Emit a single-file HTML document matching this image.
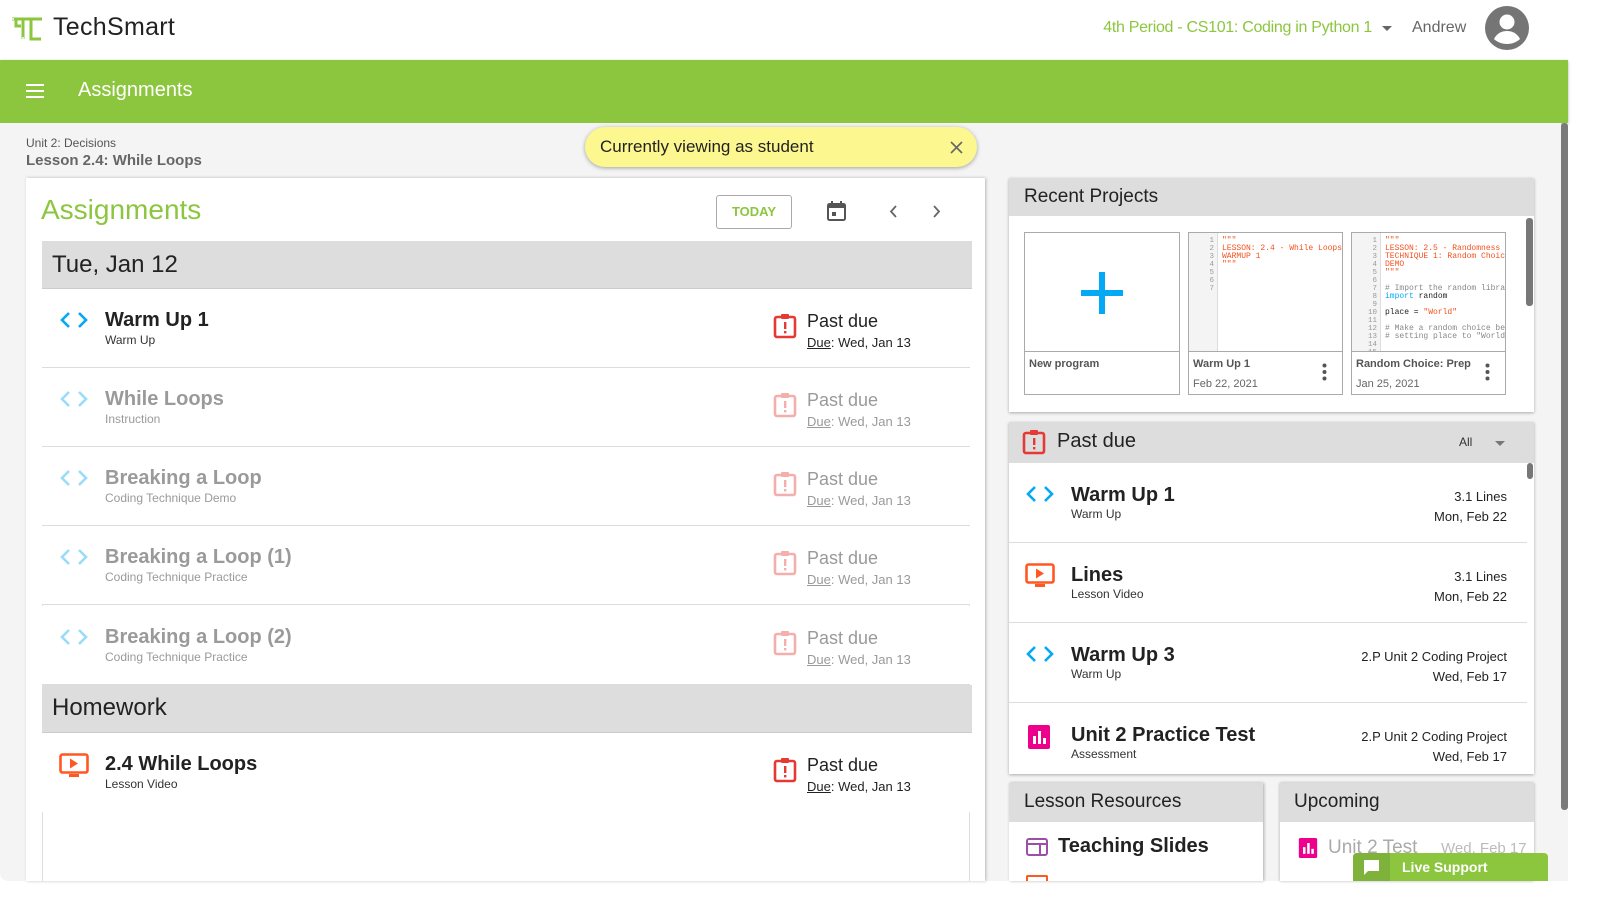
<!DOCTYPE html>
<html><head><meta charset="utf-8">
<style>
*{box-sizing:border-box;margin:0;padding:0}
body{width:1600px;height:899px;background:#fff;font-family:"Liberation Sans",Roboto,Arial,sans-serif;position:relative;overflow:hidden;color:#222}
.a{position:absolute}
.row{position:absolute;left:42px;width:928px;height:79px;border-bottom:1px solid #ddd;background:#fff}
.row .ic{position:absolute;left:18px;top:22px}
.row .t{position:absolute;left:63px;top:20px;font-size:20px;font-weight:bold;color:#222}
.row .s{position:absolute;left:63px;top:44px;font-size:12px;color:#333}
.row .pi{position:absolute;left:731px;top:24px}
.row .pd{position:absolute;left:765px;top:22px;font-size:18px;color:#222}
.row .dd{position:absolute;left:765px;top:46px;font-size:13px;color:#222}
.row .dd u{text-decoration:underline}
.fade .t,.fade .s,.fade .pd,.fade .dd{color:#9a9a9a}
.fade svg{opacity:.4}
.hdr{position:absolute;background:#ddd;color:#222}
.prow{position:absolute;left:1009px;width:518px;height:80px;border-bottom:1px solid #ddd;background:#fff}
.prow .ic{position:absolute;left:17px;top:22px}
.prow .t{position:absolute;left:62px;top:21px;font-size:20px;font-weight:bold}
.prow .s{position:absolute;left:62px;top:44px;font-size:12px;color:#333}
.prow .r1{position:absolute;right:20px;top:26px;font-size:13px;color:#222}
.prow .r2{position:absolute;right:20px;top:46px;font-size:13px;color:#222}
.card{position:absolute;top:232px;width:156px;height:163px;border:1px solid #aaa;background:#fff;overflow:hidden}
.card .img{position:absolute;left:0;top:0;width:154px;height:119px;border-bottom:1px solid #aaa;overflow:hidden}
.card .gut{position:absolute;left:0;top:0;width:29px;height:119px;background:#f4f4f4;border-right:1px solid #ddd;font:7.5px/8px "Liberation Mono",monospace;color:#999;text-align:right;padding:4px 3px 0 0}
.card .code{position:absolute;left:33px;top:4px;font:8px/8px "Liberation Mono",monospace;color:#222;white-space:pre}
.card .n{position:absolute;left:4px;top:125px;font-size:11px;font-weight:bold;color:#555}
.card .d{position:absolute;left:4px;top:145px;font-size:11px;color:#666}
.o{color:#f4511e}.g{color:#888}.b{color:#03a9f4}
</style></head><body>

<!-- header -->
<svg class="a" style="left:10px;top:16px" width="36" height="25" viewBox="0 0 36 25"><g fill="none" stroke="#8cc63f" stroke-width="3"><path d="M2 3h30"/><path d="M13 3v20"/><path d="M21 3v20h10"/><path d="M6 3v7h5"/></g><g fill="#fff"><circle cx="3" cy="3" r="1"/><circle cx="33" cy="3" r="1"/><circle cx="13" cy="22" r="1"/><circle cx="32" cy="23" r="1"/></g></svg>
<div class="a" style="left:53px;top:13px;font-size:25px;color:#222;letter-spacing:.3px">TechSmart</div>
<div class="a" style="right:228px;top:19px;font-size:16px;color:#8cc63f;letter-spacing:-.3px;white-space:nowrap">4th Period - CS101: Coding in Python 1</div>
<div class="a" style="left:1382px;top:26px;width:0;height:0;border-left:5px solid transparent;border-right:5px solid transparent;border-top:5px solid #666"></div>
<div class="a" style="left:1412px;top:19px;font-size:16px;color:#666">Andrew</div>
<svg class="a" style="left:1485px;top:6px" width="44" height="44" viewBox="0 0 44 44"><circle cx="22" cy="22" r="22" fill="#757575"/><circle cx="22" cy="16" r="7.5" fill="#fff"/><path d="M9 33c3-6 8-8 13-8s10 2 13 8c-3 3-8 5-13 5s-10-2-13-5z" fill="#fff"/></svg>

<!-- green bar -->
<div class="a" style="left:0;top:60px;width:1568px;height:63px;background:#8cc63f;box-shadow:0 1px 3px rgba(0,0,0,.3)"></div>
<svg class="a" style="left:26px;top:84px" width="18" height="14"><g fill="#fff"><rect y="0" width="18" height="2"/><rect y="6" width="18" height="2"/><rect y="12" width="18" height="2"/></g></svg>
<div class="a" style="left:78px;top:79px;font-size:20px;color:#fff;font-weight:500">Assignments</div>

<!-- main bg -->
<div class="a" style="left:0;top:123px;width:1561px;height:758px;background:#f4f4f4;border-bottom-left-radius:8px"></div>
<div class="a" style="left:1561px;top:123px;width:7px;height:687px;background:#7a7a7a;border-radius:3px"></div>
<div class="a" style="left:1561px;top:810px;width:7px;height:71px;background:#f4f4f4"></div>

<div class="a" style="left:26px;top:136px;font-size:12px;color:#555">Unit 2: Decisions</div>
<div class="a" style="left:26px;top:152px;font-size:15px;font-weight:bold;color:#666">Lesson 2.4: While Loops</div>

<!-- toast -->
<div class="a" style="left:585px;top:127px;width:392px;height:40px;background:#fdf78f;border-radius:20px;box-shadow:0 1px 4px rgba(0,0,0,.35)"></div>
<div class="a" style="left:600px;top:137px;font-size:17px;color:#222">Currently viewing as student</div>
<svg class="a" style="left:950px;top:141px" width="13" height="13"><path d="M1 1l11 11M12 1L1 12" stroke="#666" stroke-width="1.6"/></svg>

<!-- left card -->
<div class="a" style="left:26px;top:178px;width:959px;height:703px;background:#fff;box-shadow:1px 0 3px rgba(0,0,0,.25)"></div>
<div class="a" style="left:41px;top:194px;font-size:28px;color:#8cc63f">Assignments</div>
<div class="a" style="left:716px;top:195px;width:76px;height:34px;border:1px solid #aaa;border-radius:3px;font-size:13px;font-weight:bold;color:#8cc63f;text-align:center;line-height:32px">TODAY</div>
<svg class="a" style="left:827px;top:201px" width="19" height="20" viewBox="0 0 19 20"><rect x="1" y="3" width="17" height="16" rx="1.5" fill="none" stroke="#555" stroke-width="2"/><rect x="1" y="3" width="17" height="4" fill="#555"/><rect x="4" y="0" width="2" height="4" fill="#555"/><rect x="13" y="0" width="2" height="4" fill="#555"/><rect x="5" y="11" width="4" height="4" fill="#555"/></svg>
<svg class="a" style="left:889px;top:205px" width="9" height="13"><path d="M7 1L2 6.5 7 12" fill="none" stroke="#666" stroke-width="1.8"/></svg>
<svg class="a" style="left:932px;top:205px" width="9" height="13"><path d="M2 1l5 5.5L2 12" fill="none" stroke="#666" stroke-width="1.8"/></svg>

<div class="a" style="left:42px;top:241px;width:928px;height:640px;border-left:1px solid #ddd;border-right:1px solid #ddd"></div>
<div class="hdr" style="left:42px;top:241px;width:930px;height:48px;font-size:24px;padding:10px 0 0 10px;border-bottom:1px solid #ccc">Tue, Jan 12</div>

<div class="row" style="top:289px"><svg class="ic" width="28" height="18" viewBox="0 0 28 18"><path d="M9 2L2 9l7 7M19 2l7 7-7 7" fill="none" stroke="#03a9f4" stroke-width="2.6"/></svg><div class="t">Warm Up 1</div><div class="s">Warm Up</div>
<svg class="pi" width="24" height="26" viewBox="0 0 24 26"><rect x="2" y="4" width="20" height="20" rx="2" fill="none" stroke="#e53935" stroke-width="2.6"/><rect x="8" y="1" width="8" height="5" rx="1" fill="#e53935"/><rect x="11" y="9" width="2.4" height="7" fill="#e53935"/><rect x="11" y="18" width="2.4" height="2.4" fill="#e53935"/></svg><div class="pd">Past due</div><div class="dd"><u>Due</u>: Wed, Jan 13</div></div>

<div class="row fade" style="top:368px"><svg class="ic" width="28" height="18" viewBox="0 0 28 18"><path d="M9 2L2 9l7 7M19 2l7 7-7 7" fill="none" stroke="#03a9f4" stroke-width="2.6"/></svg><div class="t">While Loops</div><div class="s">Instruction</div>
<svg class="pi" width="24" height="26" viewBox="0 0 24 26"><rect x="2" y="4" width="20" height="20" rx="2" fill="none" stroke="#e53935" stroke-width="2.6"/><rect x="8" y="1" width="8" height="5" rx="1" fill="#e53935"/><rect x="11" y="9" width="2.4" height="7" fill="#e53935"/><rect x="11" y="18" width="2.4" height="2.4" fill="#e53935"/></svg><div class="pd">Past due</div><div class="dd"><u>Due</u>: Wed, Jan 13</div></div>

<div class="row fade" style="top:447px"><svg class="ic" width="28" height="18" viewBox="0 0 28 18"><path d="M9 2L2 9l7 7M19 2l7 7-7 7" fill="none" stroke="#03a9f4" stroke-width="2.6"/></svg><div class="t">Breaking a Loop</div><div class="s">Coding Technique Demo</div>
<svg class="pi" width="24" height="26" viewBox="0 0 24 26"><rect x="2" y="4" width="20" height="20" rx="2" fill="none" stroke="#e53935" stroke-width="2.6"/><rect x="8" y="1" width="8" height="5" rx="1" fill="#e53935"/><rect x="11" y="9" width="2.4" height="7" fill="#e53935"/><rect x="11" y="18" width="2.4" height="2.4" fill="#e53935"/></svg><div class="pd">Past due</div><div class="dd"><u>Due</u>: Wed, Jan 13</div></div>

<div class="row fade" style="top:526px"><svg class="ic" width="28" height="18" viewBox="0 0 28 18"><path d="M9 2L2 9l7 7M19 2l7 7-7 7" fill="none" stroke="#03a9f4" stroke-width="2.6"/></svg><div class="t">Breaking a Loop (1)</div><div class="s">Coding Technique Practice</div>
<svg class="pi" width="24" height="26" viewBox="0 0 24 26"><rect x="2" y="4" width="20" height="20" rx="2" fill="none" stroke="#e53935" stroke-width="2.6"/><rect x="8" y="1" width="8" height="5" rx="1" fill="#e53935"/><rect x="11" y="9" width="2.4" height="7" fill="#e53935"/><rect x="11" y="18" width="2.4" height="2.4" fill="#e53935"/></svg><div class="pd">Past due</div><div class="dd"><u>Due</u>: Wed, Jan 13</div></div>

<div class="row fade" style="top:606px"><svg class="ic" width="28" height="18" viewBox="0 0 28 18"><path d="M9 2L2 9l7 7M19 2l7 7-7 7" fill="none" stroke="#03a9f4" stroke-width="2.6"/></svg><div class="t">Breaking a Loop (2)</div><div class="s">Coding Technique Practice</div>
<svg class="pi" width="24" height="26" viewBox="0 0 24 26"><rect x="2" y="4" width="20" height="20" rx="2" fill="none" stroke="#e53935" stroke-width="2.6"/><rect x="8" y="1" width="8" height="5" rx="1" fill="#e53935"/><rect x="11" y="9" width="2.4" height="7" fill="#e53935"/><rect x="11" y="18" width="2.4" height="2.4" fill="#e53935"/></svg><div class="pd">Past due</div><div class="dd"><u>Due</u>: Wed, Jan 13</div></div>

<div class="hdr" style="left:42px;top:685px;width:930px;height:48px;font-size:24px;padding:9px 0 0 10px;border-bottom:1px solid #ccc">Homework</div>
<div class="row" style="top:733px;border-bottom:none"><svg class="ic" style="top:20px;left:17px" width="30" height="26" viewBox="0 0 30 26"><rect x="1.5" y="1.5" width="27" height="18" rx="2" fill="none" stroke="#ff5722" stroke-width="2.6"/><path d="M11 5.5v10l8-5z" fill="#ff5722"/><rect x="10" y="21" width="10" height="3" fill="#ff5722"/></svg><div class="t">2.4 While Loops</div><div class="s">Lesson Video</div>
<svg class="pi" width="24" height="26" viewBox="0 0 24 26"><rect x="2" y="4" width="20" height="20" rx="2" fill="none" stroke="#e53935" stroke-width="2.6"/><rect x="8" y="1" width="8" height="5" rx="1" fill="#e53935"/><rect x="11" y="9" width="2.4" height="7" fill="#e53935"/><rect x="11" y="18" width="2.4" height="2.4" fill="#e53935"/></svg><div class="pd">Past due</div><div class="dd"><u>Due</u>: Wed, Jan 13</div></div>

<!-- Recent projects -->
<div class="a" style="left:1009px;top:178px;width:525px;height:234px;background:#fff;box-shadow:0 1px 3px rgba(0,0,0,.3)"></div>
<div class="hdr" style="left:1009px;top:178px;width:525px;height:38px;font-size:19px;padding:8px 0 0 15px">Recent Projects</div>
<div class="a" style="left:1526px;top:218px;width:7px;height:88px;background:#777;border-radius:3px"></div>
<div class="card" style="left:1024px"><div class="img"><svg class="a" style="left:56px;top:39px" width="42" height="42"><rect x="18" y="0" width="6" height="42" fill="#03a9f4"/><rect x="0" y="18" width="42" height="6" fill="#03a9f4"/></svg></div><div class="n">New program</div></div>
<div class="card" style="left:1188px;width:155px"><div class="img"><div class="gut">1<br>2<br>3<br>4<br>5<br>6<br>7</div><div class="code"><span class="o">"""
LESSON: 2.4 - While Loops
WARMUP 1
"""</span></div></div><div class="n">Warm Up 1</div><div class="d">Feb 22, 2021</div>
<svg class="a" style="left:133px;top:130px" width="5" height="18"><circle cx="2.5" cy="2.5" r="2" fill="#555"/><circle cx="2.5" cy="9" r="2" fill="#555"/><circle cx="2.5" cy="15.5" r="2" fill="#555"/></svg></div>
<div class="card" style="left:1351px;width:155px"><div class="img"><div class="gut">1<br>2<br>3<br>4<br>5<br>6<br>7<br>8<br>9<br>10<br>11<br>12<br>13<br>14<br>15</div><div class="code"><span class="o">"""
LESSON: 2.5 - Randomness &amp;
TECHNIQUE 1: Random Choice
DEMO
"""</span>

<span class="g"># Import the random library</span>
<span class="b">import</span> random

place = <span class="o">"World"</span>

<span class="g"># Make a random choice bet</span>
<span class="g"># setting place to "World"</span></div></div><div class="n">Random Choice: Prep</div><div class="d">Jan 25, 2021</div>
<svg class="a" style="left:133px;top:130px" width="5" height="18"><circle cx="2.5" cy="2.5" r="2" fill="#555"/><circle cx="2.5" cy="9" r="2" fill="#555"/><circle cx="2.5" cy="15.5" r="2" fill="#555"/></svg></div>

<!-- Past due panel -->
<div class="a" style="left:1009px;top:422px;width:525px;height:352px;background:#fff;box-shadow:0 1px 3px rgba(0,0,0,.3)"></div>
<div class="hdr" style="left:1009px;top:422px;width:525px;height:41px;font-size:20px;padding:8px 0 0 48px">Past due</div>
<svg class="a" style="left:1022px;top:429px" width="24" height="26" viewBox="0 0 24 26"><rect x="2" y="4" width="20" height="20" rx="2" fill="none" stroke="#e53935" stroke-width="2.6"/><rect x="8" y="1" width="8" height="5" rx="1" fill="#e53935"/><rect x="11" y="9" width="2.4" height="7" fill="#e53935"/><rect x="11" y="18" width="2.4" height="2.4" fill="#e53935"/></svg>
<div class="a" style="left:1459px;top:435px;font-size:12px;color:#333">All</div>
<div class="a" style="left:1495px;top:441px;width:0;height:0;border-left:5px solid transparent;border-right:5px solid transparent;border-top:5px solid #777"></div>
<div class="a" style="left:1527px;top:463px;width:6px;height:16px;background:#777;border-radius:3px"></div>

<div class="prow" style="top:463px"><svg class="ic" width="28" height="18" viewBox="0 0 28 18"><path d="M9 2L2 9l7 7M19 2l7 7-7 7" fill="none" stroke="#03a9f4" stroke-width="2.6"/></svg><div class="t">Warm Up 1</div><div class="s">Warm Up</div><div class="r1">3.1 Lines</div><div class="r2">Mon, Feb 22</div></div>
<div class="prow" style="top:543px"><svg class="ic" style="top:20px;left:16px" width="30" height="26" viewBox="0 0 30 26"><rect x="1.5" y="1.5" width="27" height="18" rx="2" fill="none" stroke="#ff5722" stroke-width="2.6"/><path d="M11 5.5v10l8-5z" fill="#ff5722"/><rect x="10" y="21" width="10" height="3" fill="#ff5722"/></svg><div class="t">Lines</div><div class="s">Lesson Video</div><div class="r1">3.1 Lines</div><div class="r2">Mon, Feb 22</div></div>
<div class="prow" style="top:623px"><svg class="ic" width="28" height="18" viewBox="0 0 28 18"><path d="M9 2L2 9l7 7M19 2l7 7-7 7" fill="none" stroke="#03a9f4" stroke-width="2.6"/></svg><div class="t">Warm Up 3</div><div class="s">Warm Up</div><div class="r1">2.P Unit 2 Coding Project</div><div class="r2">Wed, Feb 17</div></div>
<div class="prow" style="top:703px;height:71px;border-bottom:none"><svg class="ic" style="left:19px" width="22" height="24" viewBox="0 0 22 24"><rect width="22" height="24" rx="2" fill="#ec008c"/><rect x="5" y="11" width="3" height="8" fill="#fff"/><rect x="10" y="6" width="3" height="13" fill="#fff"/><rect x="15" y="13" width="3" height="6" fill="#fff"/></svg><div class="t">Unit 2 Practice Test</div><div class="s">Assessment</div><div class="r1">2.P Unit 2 Coding Project</div><div class="r2">Wed, Feb 17</div></div>

<!-- Lesson resources / upcoming -->
<div class="a" style="left:1009px;top:783px;width:254px;height:98px;background:#fff;box-shadow:1px 0 3px rgba(0,0,0,.3)"></div>
<div class="hdr" style="left:1009px;top:783px;width:254px;height:39px;font-size:19px;padding:8px 0 0 15px">Lesson Resources</div>
<svg class="a" style="left:1026px;top:838px" width="22" height="18" viewBox="0 0 22 18"><rect x="1" y="1" width="20" height="16" rx="2" fill="none" stroke="#9c4fa6" stroke-width="2"/><rect x="1" y="5" width="20" height="2" fill="#9c4fa6"/><rect x="13" y="7" width="2" height="10" fill="#9c4fa6"/></svg>
<div class="a" style="left:1058px;top:835px;font-size:20px;font-weight:bold">Teaching Slides</div>
<div class="a" style="left:1026px;top:875px;width:22px;height:6px;border:2px solid #ff5722;border-bottom:none;border-radius:2px 2px 0 0"></div>

<div class="a" style="left:1280px;top:783px;width:254px;height:98px;background:#fff;box-shadow:0 0 3px rgba(0,0,0,.3)"></div>
<div class="hdr" style="left:1280px;top:783px;width:254px;height:39px;font-size:19px;padding:8px 0 0 14px">Upcoming</div>
<svg class="a" style="left:1298px;top:838px" width="20" height="20" viewBox="0 0 22 24"><rect width="22" height="24" rx="2" fill="#ec008c"/><rect x="5" y="11" width="3" height="8" fill="#fff"/><rect x="10" y="6" width="3" height="13" fill="#fff"/><rect x="15" y="13" width="3" height="6" fill="#fff"/></svg>
<div class="a" style="left:1328px;top:837px;font-size:19px;color:#aaa">Unit 2 Test</div>
<div class="a" style="left:1441px;top:840px;font-size:15px;color:#bbb">Wed, Feb 17</div>

<!-- live support -->
<div class="a" style="left:1353px;top:853px;width:195px;height:28px;background:#8cc63f;border-radius:4px 4px 0 0"></div>
<div class="a" style="left:1353px;top:853px;width:37px;height:28px;background:#7fb23a;border-radius:4px 0 0 0"></div>
<svg class="a" style="left:1363px;top:859px" width="17" height="16" viewBox="0 0 17 16"><path d="M1 1h15v11H5l-4 4z" fill="#fff"/></svg>
<div class="a" style="left:1402px;top:859px;font-size:14px;font-weight:bold;color:#fff">Live Support</div>

</body></html>
